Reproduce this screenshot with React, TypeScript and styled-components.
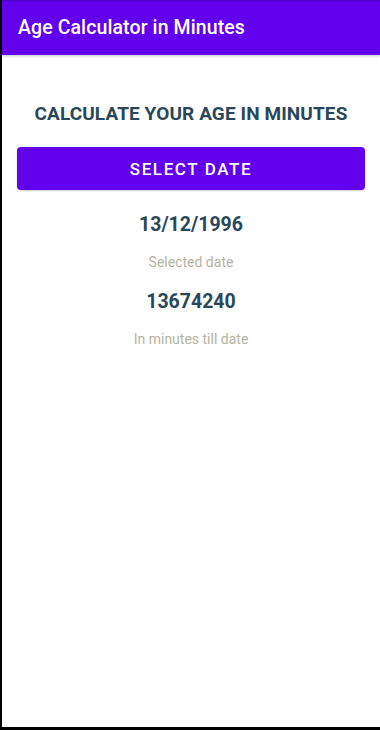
import React from "react"
import styled, { createGlobalStyle } from "styled-components"

const Global = createGlobalStyle`
  html, body {
    margin: 0;
    padding: 0;
    background: #fff;
  }
  body {
    font-family: Roboto, "Noto Sans", sans-serif;
  }
`

const Screen = styled.div`
  width: 380px;
  height: 730px;
  box-sizing: border-box;
  border-left: 2px solid #000;
  border-bottom: 3px solid #000;
  display: flex;
  flex-direction: column;
  background: #fff;
`

const AppBar = styled.header`
  height: 55px;
  box-sizing: border-box;
  border-top: 1px solid #4d00c0;
  background: #6200ee;
  display: flex;
  align-items: center;
  padding: 0 0 2px 16px;
  box-shadow: 0 1px 3px rgba(0, 0, 0, 0.25);
  position: relative;
  z-index: 1;
`

const AppTitle = styled.h1`
  margin: 0;
  color: #fff;
  font-size: 19.5px;
  font-weight: 500;
  letter-spacing: 0.1px;
`

const Content = styled.main`
  display: flex;
  flex-direction: column;
  align-items: center;
  padding: 47px 15px 0 15px;
`

const Heading = styled.h2`
  margin: 0;
  color: #2a4757;
  font-size: 19px;
  font-weight: 700;
  line-height: 24px;
  letter-spacing: 0.1px;
`

const SelectButton = styled.button`
  margin-top: 21px;
  width: 100%;
  height: 43px;
  border: none;
  border-radius: 4px;
  background: #6200ee;
  color: #fff;
  font-family: inherit;
  font-size: 17px;
  font-weight: 500;
  letter-spacing: 1.6px;
  text-transform: uppercase;
  box-shadow: 0 1px 2px rgba(0, 0, 0, 0.2);
`

const Value = styled.div<{ $top: number }>`
  margin-top: ${(p) => p.$top}px;
  color: #2a4757;
  font-size: 19.5px;
  font-weight: 700;
  line-height: 24px;
`

const Caption = styled.div`
  margin-top: 15px;
  color: #b5b4a2;
  font-size: 14px;
  line-height: 20px;
`

export default function App() {
  return (
    <>
      <Global />
      <Screen>
        <AppBar>
          <AppTitle>Age Calculator in Minutes</AppTitle>
        </AppBar>
        <Content>
          <Heading>CALCULATE YOUR AGE IN MINUTES</Heading>
          <SelectButton>Select Date</SelectButton>
          <Value $top={23}>13/12/1996</Value>
          <Caption>Selected date</Caption>
          <Value $top={18}>13674240</Value>
          <Caption>In minutes till date</Caption>
        </Content>
      </Screen>
    </>
  )
}
